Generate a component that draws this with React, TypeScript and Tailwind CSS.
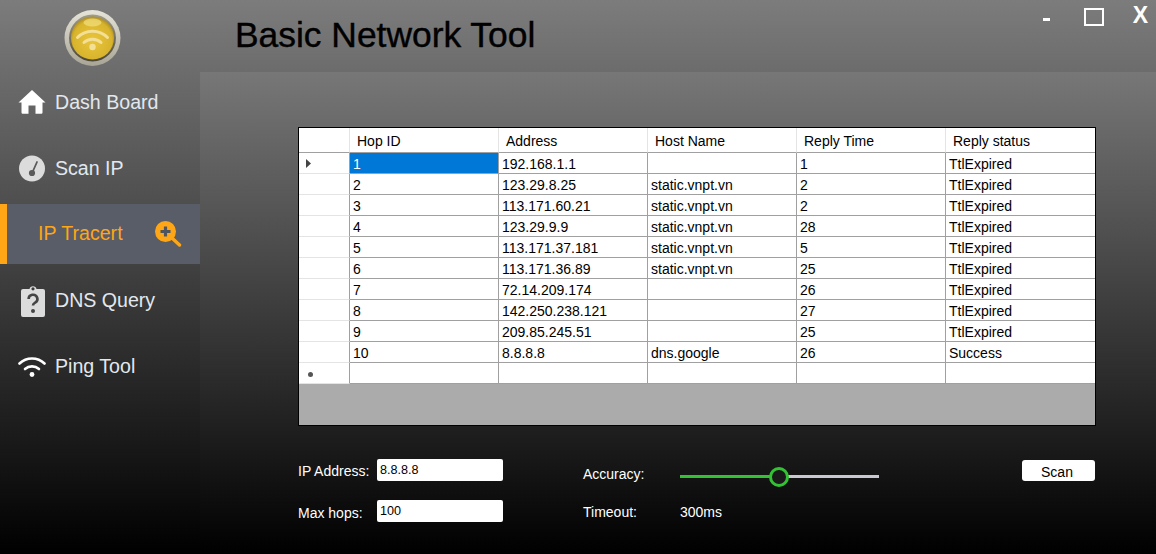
import React from "react";

const rows = [
  ["1", "192.168.1.1", "", "1", "TtlExpired"],
  ["2", "123.29.8.25", "static.vnpt.vn", "2", "TtlExpired"],
  ["3", "113.171.60.21", "static.vnpt.vn", "2", "TtlExpired"],
  ["4", "123.29.9.9", "static.vnpt.vn", "28", "TtlExpired"],
  ["5", "113.171.37.181", "static.vnpt.vn", "5", "TtlExpired"],
  ["6", "113.171.36.89", "static.vnpt.vn", "25", "TtlExpired"],
  ["7", "72.14.209.174", "", "26", "TtlExpired"],
  ["8", "142.250.238.121", "", "27", "TtlExpired"],
  ["9", "209.85.245.51", "", "25", "TtlExpired"],
  ["10", "8.8.8.8", "dns.google", "26", "Success"],
  ["", "", "", "", ""],
];
const heads = ["Hop ID", "Address", "Host Name", "Reply Time", "Reply status"];

function Logo() {
  return (
    <svg width="57" height="57" viewBox="0 0 57 57">
      <defs>
        <linearGradient id="ring" x1="0" y1="0" x2="0" y2="1">
          <stop offset="0" stopColor="#e6e4d8" />
          <stop offset="1" stopColor="#a8a596" />
        </linearGradient>
        <linearGradient id="inner" x1="0" y1="0" x2="0" y2="1">
          <stop offset="0" stopColor="#a09c88" />
          <stop offset="1" stopColor="#4c4636" />
        </linearGradient>
        <radialGradient id="ball" cx="0.5" cy="0.55" r="0.6">
          <stop offset="0" stopColor="#e8c63c" />
          <stop offset="0.75" stopColor="#d8b42c" />
          <stop offset="1" stopColor="#94781f" />
        </radialGradient>
      </defs>
      <circle cx="28.5" cy="28" r="28" fill="url(#ring)" />
      <circle cx="28.5" cy="28" r="23.5" fill="url(#inner)" />
      <circle cx="28.5" cy="28" r="21.5" fill="url(#ball)" />
      <ellipse cx="28.5" cy="12.5" rx="9" ry="4" fill="#f6e68c" opacity="0.6" />
      <g fill="none" stroke="#f4df96" strokeWidth="3" strokeLinecap="round">
        <path d="M13.5 27.5a21 21 0 0 1 30 0" />
        <path d="M20 32.5a12.5 12.5 0 0 1 17 0" />
      </g>
      <circle cx="28.5" cy="37" r="3.2" fill="#f4df96" />
    </svg>
  );
}

const Home = () => (
  <svg width="28" height="24" viewBox="0 0 28 24" fill="#fff" className="-mt-[3px]">
    <path d="M14 0 L27.5 12.5 L24.5 12.5 L24.5 22.5a1.2 1.2 0 0 1-1.2 1.2H17.5V15.5H10.5V23.7H4.7a1.2 1.2 0 0 1-1.2-1.2V12.5H.5Z" />
  </svg>
);
const Gauge = () => (
  <svg width="26" height="27" viewBox="0 0 26 27" className="ml-[1px] -mt-[1px]">
    <circle cx="13" cy="13.5" r="13" fill="#dcdcdc" />
    <path d="M18 7 L14 16" stroke="#5a5a5a" strokeWidth="1.8" strokeLinecap="round" />
    <circle cx="13" cy="18" r="3.1" fill="#5a5a5a" />
  </svg>
);
const Zoom = () => (
  <svg width="27" height="26" viewBox="0 0 27 26">
    <path d="M17 17 L24.5 24" stroke="#ffa616" strokeWidth="3.4" strokeLinecap="round" />
    <circle cx="10.5" cy="10.5" r="10.5" fill="#ffa616" />
    <path d="M10.5 5.5v10M5.5 10.5h10" stroke="#4f5560" strokeWidth="3.2" />
  </svg>
);
const Tag = () => (
  <svg width="24" height="32" viewBox="0 0 24 32" className="ml-[3px]">
    <path fillRule="evenodd" fill="#dcdcdc" d="M2 4h6.5a3.6 3.6 0 0 1 7 0H22a2 2 0 0 1 2 2v24a2 2 0 0 1-2 2H2a2 2 0 0 1-2-2V6a2 2 0 0 1 2-2Zm10-1.8a1.6 1.6 0 1 0 0 3.2 1.6 1.6 0 0 0 0-3.2Z" />
    <path d="M7.6 14a4.4 4.2 0 1 1 6.6 3.6c-1.4.9-2.2 1.3-2.2 3" fill="none" stroke="#444" strokeWidth="2.6" />
    <circle cx="12" cy="26" r="2" fill="#444" />
  </svg>
);
const Wifi = () => (
  <svg width="28" height="22" viewBox="0 0 28 22" fill="none" stroke="#fff" strokeWidth="2.6" strokeLinecap="round">
    <path d="M1.5 7.5a18 18 0 0 1 25 0" />
    <path d="M7 13a10.5 10.5 0 0 1 14 0" />
    <circle cx="14" cy="18.5" r="2.4" fill="#fff" stroke="none" />
  </svg>
);

function NavItem({ icon, label }: { icon: React.ReactNode; label: string }) {
  return (
    <div className="flex h-[66px] items-center pl-[18px] text-[19.6px] text-[#e2e8ee]">
      <span className="flex w-[37px] justify-start">{icon}</span>
      <span>{label}</span>
    </div>
  );
}

export default function App() {
  return (
    <div
      className="flex h-[554px] w-[1156px] overflow-hidden bg-[linear-gradient(to_bottom,#7c7c7c,#000000)] text-white"
      style={{ fontFamily: '"Liberation Sans", Arial, sans-serif' }}
    >
      <aside className="flex w-[200px] shrink-0 flex-col">
        <div className="flex h-[70px] justify-start pl-[64px] pt-[10px]">
          <Logo />
        </div>
        <NavItem icon={<Home />} label="Dash Board" />
        <NavItem icon={<Gauge />} label="Scan IP" />
        <div className="mt-[2px] flex h-[60px] items-center border-l-[7px] border-[#ffa616] bg-[#585d68] pl-[31px] pr-[18px] text-[19.6px] text-[#ffa616]">
          <span className="flex-1">IP Tracert</span>
          <Zoom />
        </div>
        <div className="h-[4px]" />
        <NavItem icon={<Tag />} label="DNS Query" />
        <NavItem icon={<Wifi />} label="Ping Tool" />
      </aside>

      <div className="flex min-w-0 flex-1 flex-col">
        <header className="relative h-[72px] shrink-0 pl-[35px] pt-[15px]">
          <h1 className="text-[35.4px] leading-[40px] font-normal text-black [-webkit-text-stroke:0.4px_#000000]">Basic Network Tool</h1>
          <span className="absolute right-[106px] top-[18px] h-[3px] w-[7px] bg-white" />
          <span className="absolute right-[52px] top-[8px] h-[18px] w-[20px] border-[2.5px] border-white" />
          <span className="absolute right-[8px] top-[2px] text-[23px] leading-[26px] font-bold">X</span>
        </header>

        <main className="flex-1 bg-[linear-gradient(to_bottom,#777777,#000000)] pl-[98px] pt-[55px]">
          <div className="h-[299px] w-[798px] border border-black bg-[#ababab]">
            <div className="grid grid-cols-[51px_149px_149px_149px_149px_149px] bg-white text-black">
              <div className="h-[25px] border-r border-b border-[#a0a0a0] border-r-[#e4e4e4]" />
              {heads.map((h, i) => (
                <div key={h} className={`flex h-[25px] items-center border-b border-[#a0a0a0] pl-[7px] pt-[2px] text-[14px] ${i < 4 ? "border-r border-r-[#e4e4e4]" : ""}`}>
                  {h}
                </div>
              ))}
              {rows.map((r, ri) => (
                <React.Fragment key={ri}>
                  <div className="flex h-[21px] items-center justify-start border-r border-b border-[#a0a0a0] border-b-[#e4e4e4] pl-[7px]">
                    {ri === 0 ? (
                      <svg width="5" height="9" viewBox="0 0 5 9"><path d="M0 0l5 4.5L0 9Z" fill="#444" /></svg>
                    ) : ri === 10 ? (
                      <span className="ml-[2px] mt-[2px] h-[5px] w-[5px] rounded-full bg-[#555555]" />
                    ) : null}
                  </div>
                  {r.map((c, ci) => (
                    <div
                      key={ci}
                      className={`flex h-[21px] items-center border-b border-[#a0a0a0] pl-[3px] pt-[2px] text-[14px] ${ci < 4 ? "border-r" : ""} ${ri === 0 && ci === 0 ? "bg-[#0078d7] text-white" : ""}`}
                    >
                      {c}
                    </div>
                  ))}
                </React.Fragment>
              ))}
            </div>
          </div>

          <div className="mt-[33px] flex text-[14px] text-white">
            <div className="flex w-[285px] flex-col gap-[19px]">
              <label className="flex h-[22px] items-center">
                <span className="w-[79px] pt-[3px]">IP Address:</span>
                <span className="flex h-[22px] w-[126px] items-center rounded-[2px] bg-white pl-[3px] text-[12.6px] text-black">8.8.8.8</span>
              </label>
              <label className="flex h-[22px] items-center">
                <span className="w-[79px] pt-[4px]">Max hops:</span>
                <span className="flex h-[22px] w-[126px] items-center rounded-[2px] bg-white pl-[3px] text-[12.6px] text-black">100</span>
              </label>
            </div>
            <div className="flex w-[439px] flex-col gap-[16px] pt-[4px]">
              <div className="flex h-[22px] items-center">
                <span className="w-[97px]">Accuracy:</span>
                <div className="relative mt-[5px] flex h-[3px] w-[199px] bg-[#c8c8d0]">
                  <div className="h-[3px] w-[99px] bg-[#33c233]" />
                  <span className="absolute left-[89px] top-[-8px] h-[20px] w-[20px] rounded-full border-[3px] border-[#33c233] bg-[#1a1a1a]" />
                </div>
              </div>
              <div className="flex h-[22px] items-center">
                <span className="w-[97px]">Timeout:</span>
                <span>300ms</span>
              </div>
            </div>
            <button className="mt-[1px] h-[21px] w-[73px] rounded-[3px] bg-white pt-[2px] pr-[3px] text-black">Scan</button>
          </div>
        </main>
      </div>
    </div>
  );
}
